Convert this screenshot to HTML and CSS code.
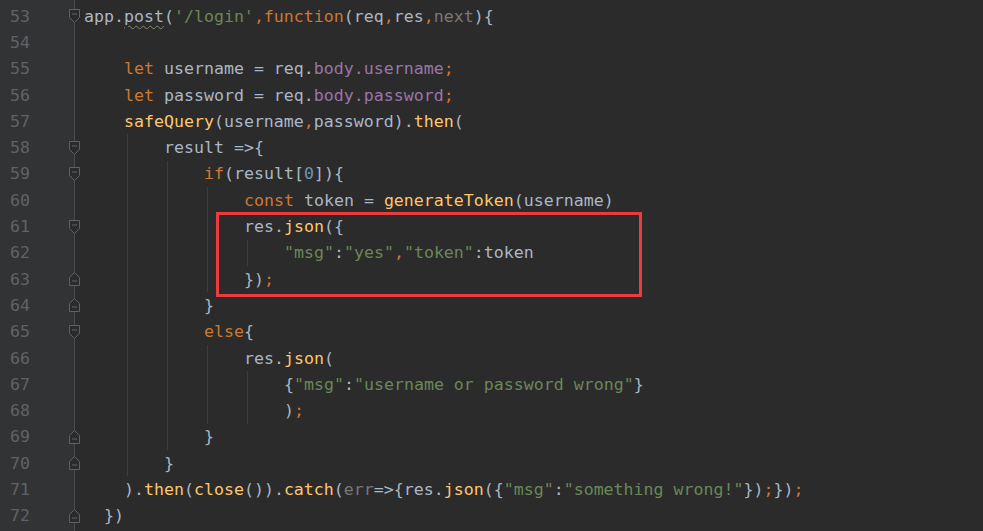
FILE: index.html
```html
<!DOCTYPE html>
<html lang="en">
<head>
  <meta charset="UTF-8">
  <meta name="viewport" content="width=device-width, initial-scale=1.0">
  <title>login.js</title>
  <link rel="stylesheet" href="styles.css">
</head>
<body>
<div class="editor">

  <div class="line">
    <span class="num">53</span>
    <span class="fold"><svg class="mk" viewBox="0 0 12 14"><path d="M0.5 0.5H10.5V8.5L5.5 13.5L0.5 8.5Z"/><path d="M3 5H8"/></svg></span>
    <span class="code"><span class="txt">app.<span class="typo">post</span>(<span class="s">'/login'</span><span class="k">,function</span>(req<span class="k">,</span>res<span class="k">,</span><span class="u">next</span>){</span></span>
  </div>

  <div class="line">
    <span class="num">54</span>
    <span class="fold"></span>
    <span class="code"></span>
  </div>

  <div class="line">
    <span class="num">55</span>
    <span class="fold"></span>
    <span class="code"><span class="ind"></span><span class="txt"><span class="k">let</span> username = req.<span class="p">body.username</span><span class="k">;</span></span></span>
  </div>

  <div class="line">
    <span class="num">56</span>
    <span class="fold"></span>
    <span class="code"><span class="ind"></span><span class="txt"><span class="k">let</span> password = req.<span class="p">body.password</span><span class="k">;</span></span></span>
  </div>

  <div class="line">
    <span class="num">57</span>
    <span class="fold"></span>
    <span class="code"><span class="ind"></span><span class="txt"><span class="f">safeQuery</span>(username<span class="k">,</span>password).<span class="f">then</span>(</span></span>
  </div>

  <div class="line">
    <span class="num">58</span>
    <span class="fold"><svg class="mk" viewBox="0 0 12 14"><path d="M0.5 0.5H10.5V8.5L5.5 13.5L0.5 8.5Z"/><path d="M3 5H8"/></svg></span>
    <span class="code"><span class="ind"></span><span class="ind g"></span><span class="txt">result =&gt;{</span></span>
  </div>

  <div class="line">
    <span class="num">59</span>
    <span class="fold"><svg class="mk" viewBox="0 0 12 14"><path d="M0.5 0.5H10.5V8.5L5.5 13.5L0.5 8.5Z"/><path d="M3 5H8"/></svg></span>
    <span class="code"><span class="ind"></span><span class="ind g"></span><span class="ind g"></span><span class="txt"><span class="k">if</span>(result[<span class="n">0</span>]){</span></span>
  </div>

  <div class="line">
    <span class="num">60</span>
    <span class="fold"></span>
    <span class="code"><span class="ind"></span><span class="ind g"></span><span class="ind g"></span><span class="ind g"></span><span class="txt"><span class="k">const</span> token = <span class="f">generateToken</span>(username)</span></span>
  </div>

  <div class="line">
    <span class="num">61</span>
    <span class="fold"><svg class="mk" viewBox="0 0 12 14"><path d="M0.5 0.5H10.5V8.5L5.5 13.5L0.5 8.5Z"/><path d="M3 5H8"/></svg></span>
    <span class="code"><span class="ind"></span><span class="ind g"></span><span class="ind g"></span><span class="ind g"></span><span class="txt">res.<span class="f">json</span>({</span></span>
  </div>

  <div class="line">
    <span class="num">62</span>
    <span class="fold"></span>
    <span class="code"><span class="ind"></span><span class="ind g"></span><span class="ind g"></span><span class="ind g"></span><span class="ind g"></span><span class="txt"><span class="s">"msg"</span>:<span class="s">"yes"</span><span class="k">,</span><span class="s">"token"</span>:token</span></span>
  </div>

  <div class="line">
    <span class="num">63</span>
    <span class="fold"><svg class="mk" viewBox="0 0 12 14"><path d="M5.5 0.5L10.5 5.5V13.5H0.5V5.5Z"/><path d="M3 9H8"/></svg></span>
    <span class="code"><span class="ind"></span><span class="ind g"></span><span class="ind g"></span><span class="ind g"></span><span class="txt">})<span class="k">;</span></span></span>
  </div>

  <div class="line">
    <span class="num">64</span>
    <span class="fold"><svg class="mk" viewBox="0 0 12 14"><path d="M5.5 0.5L10.5 5.5V13.5H0.5V5.5Z"/><path d="M3 9H8"/></svg></span>
    <span class="code"><span class="ind"></span><span class="ind g"></span><span class="ind g"></span><span class="txt">}</span></span>
  </div>

  <div class="line">
    <span class="num">65</span>
    <span class="fold"><svg class="mk" viewBox="0 0 12 14"><path d="M0.5 0.5H10.5V8.5L5.5 13.5L0.5 8.5Z"/><path d="M3 5H8"/></svg></span>
    <span class="code"><span class="ind"></span><span class="ind g"></span><span class="ind g"></span><span class="txt"><span class="k">else</span>{</span></span>
  </div>

  <div class="line">
    <span class="num">66</span>
    <span class="fold"></span>
    <span class="code"><span class="ind"></span><span class="ind g"></span><span class="ind g"></span><span class="ind g"></span><span class="txt">res.<span class="f">json</span>(</span></span>
  </div>

  <div class="line">
    <span class="num">67</span>
    <span class="fold"></span>
    <span class="code"><span class="ind"></span><span class="ind g"></span><span class="ind g"></span><span class="ind g"></span><span class="ind g"></span><span class="txt">{<span class="s">"msg"</span>:<span class="s">"username or password wrong"</span>}</span></span>
  </div>

  <div class="line">
    <span class="num">68</span>
    <span class="fold"></span>
    <span class="code"><span class="ind"></span><span class="ind g"></span><span class="ind g"></span><span class="ind g"></span><span class="ind g"></span><span class="txt">)<span class="k">;</span></span></span>
  </div>

  <div class="line">
    <span class="num">69</span>
    <span class="fold"><svg class="mk" viewBox="0 0 12 14"><path d="M5.5 0.5L10.5 5.5V13.5H0.5V5.5Z"/><path d="M3 9H8"/></svg></span>
    <span class="code"><span class="ind"></span><span class="ind g"></span><span class="ind g"></span><span class="txt">}</span></span>
  </div>

  <div class="line">
    <span class="num">70</span>
    <span class="fold"><svg class="mk" viewBox="0 0 12 14"><path d="M5.5 0.5L10.5 5.5V13.5H0.5V5.5Z"/><path d="M3 9H8"/></svg></span>
    <span class="code"><span class="ind"></span><span class="ind g"></span><span class="txt">}</span></span>
  </div>

  <div class="line">
    <span class="num">71</span>
    <span class="fold"></span>
    <span class="code"><span class="ind"></span><span class="txt">).<span class="f">then</span>(<span class="f">close</span>()).<span class="f">catch</span>(<span class="u">err</span>=&gt;{res.<span class="f">json</span>({<span class="s">"msg"</span>:<span class="s">"something wrong!"</span>})<span class="k">;</span>})<span class="k">;</span></span></span>
  </div>

  <div class="line">
    <span class="num">72</span>
    <span class="fold"><svg class="mk" viewBox="0 0 12 14"><path d="M5.5 0.5L10.5 5.5V13.5H0.5V5.5Z"/><path d="M3 9H8"/></svg></span>
    <span class="code"><span class="txt">  })</span></span>
  </div>

  <!-- highlight box drawn over lines 61-63 -->
  <div class="mark"></div>
</div>
</body>
</html>
```

FILE: styles.css
```css
body {
  margin: 0;
  background: #2b2b2b;
  overflow: hidden;
  font-family: "DejaVu Sans Mono", "Liberation Mono", monospace;
  font-size: 16.6px;
  color: #a9b7c6;
}

.editor {
  position: relative;
  min-height: 100vh;
  padding-top: 3px;
  box-sizing: border-box;
  background: linear-gradient(to right, #313335 74px, #4b4d4f 74px, #4b4d4f 75px, #2b2b2b 75px);
}

.line {
  display: flex;
  height: 26.3px;
}

.num {
  width: 30px;
  flex: none;
  text-align: right;
  color: #606366;
  align-self: center;
}

.fold {
  width: 54px;
  flex: none;
  display: flex;
  align-items: center;
  justify-content: flex-end;
  padding-right: 3px;
  box-sizing: border-box;
}

.mk {
  width: 12px;
  height: 14px;
}
.mk path {
  fill: #2b2b2b;
  stroke: #5f6264;
  stroke-width: 1;
}

.code {
  display: flex;
}

.ind {
  width: 40px;
  flex: none;
}
.ind.g {
  background: linear-gradient(#3b3d3f, #3b3d3f) 3px 0 / 1px 100% no-repeat;
}

.txt {
  white-space: pre;
  align-self: center;
}

/* Darcula tokens */
.k { color: #cc7832; }
.f { color: #ffc66d; }
.s { color: #6a8759; }
.p { color: #9876aa; }
.n { color: #6897bb; }
.u { color: #787878; }

.typo {
  text-decoration: underline wavy #7f8a6c;
  text-decoration-thickness: 1px;
  text-underline-offset: 3px;
}

.mark {
  position: absolute;
  left: 216px;
  top: 212px;
  width: 426px;
  height: 85px;
  border: 3px solid #ea3b3d;
  box-sizing: border-box;
}
```
